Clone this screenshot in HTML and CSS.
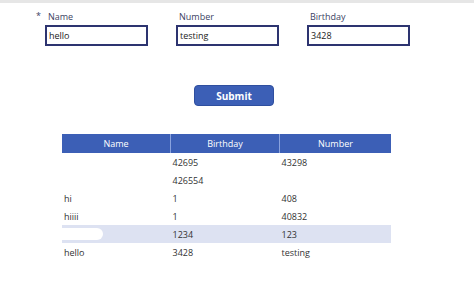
FILE: index.html
```html
<!DOCTYPE html>
<html lang="en">
<head>
    <meta charset="UTF-8">
    <meta name="viewport" content="width=device-width, initial-scale=1.0">
    <title>Birthday Form</title>
    <link rel="stylesheet" href="styles.css">
</head>
<body>
    <div class="top-bar"></div>

    <form class="entry-form">
        <div class="field">
            <span class="required">*</span>
            <label>Name</label>
            <input type="text" value="hello">
        </div>
        <div class="field">
            <label>Number</label>
            <input type="text" value="testing">
        </div>
        <div class="field">
            <label>Birthday</label>
            <input type="text" value="3428">
        </div>
    </form>

    <div class="submit-row">
        <button type="button" class="submit-btn">Submit</button>
    </div>

    <table class="data-table">
        <thead>
            <tr>
                <th class="col-name">Name</th>
                <th class="col-birthday">Birthday</th>
                <th class="col-number">Number</th>
            </tr>
        </thead>
        <tbody>
            <tr><td></td><td>42695</td><td>43298</td></tr>
            <tr><td></td><td>426554</td><td></td></tr>
            <tr><td>hi</td><td>1</td><td>408</td></tr>
            <tr><td>hiiii</td><td>1</td><td>40832</td></tr>
            <tr class="selected"><td><span class="blank-pill"></span></td><td>1234</td><td>123</td></tr>
            <tr><td>hello</td><td>3428</td><td>testing</td></tr>
        </tbody>
    </table>
</body>
</html>
```

FILE: styles.css
```css
/* General Page Styling */
body {
    font-family: "Open Sans", "Noto Sans", sans-serif;
    background-color: #fff;
    color: #333;
    margin: 0;
    padding: 0;
}

.top-bar {
    height: 3px;
    background: #e6e6e6;
}

/* Form */
.entry-form {
    display: flex;
    gap: 28px;
    padding: 7px 0 0 45px;
    margin: 0;
}

.field {
    position: relative;
    width: 103px;
    display: flex;
    flex-direction: column;
}

.field label {
    font-size: 9px;
    color: #3b3f63;
    height: 13px;
    line-height: 13px;
    padding-left: 3px;
    margin-bottom: 2px;
}

.required {
    position: absolute;
    left: -9px;
    top: 0;
    font-size: 9px;
    line-height: 11px;
    color: #3b3f63;
}

.field input {
    box-sizing: border-box;
    width: 103px;
    height: 21px;
    border: 2px solid #2d3470;
    padding: 0 2px;
    font-family: inherit;
    font-size: 9px;
    color: #222;
    outline: none;
}

/* Submit */
.submit-row {
    display: flex;
    padding: 39px 0 0 194px;
}

.submit-btn {
    width: 80px;
    height: 21px;
    background: #3c5fb6;
    border: 1px solid #2f4f9f;
    border-radius: 4px;
    color: #fff;
    font-family: inherit;
    font-size: 10px;
    font-weight: bold;
    padding: 0;
}

/* Table */
.data-table {
    margin: 28px 0 0 62px;
    border-collapse: collapse;
    table-layout: fixed;
    width: 327px;
    font-size: 9px;
}

.data-table th {
    background: #3c5fb6;
    color: #fff;
    font-weight: normal;
    height: 19px;
    padding: 0;
    border-left: 1px solid #8aa2de;
}

.data-table th:first-child {
    border-left: none;
}

.col-name { width: 108px; }
.col-birthday { width: 108px; }
.col-number { width: 111px; }

.data-table td {
    height: 18px;
    padding: 0 2px;
    color: #333;
}

.data-table tr.selected td {
    background: #dde2f2;
}

.blank-pill {
    display: block;
    width: 41px;
    height: 12px;
    margin-left: -2px;
    background: #fff;
    border-radius: 0 6px 6px 0;
}
```
